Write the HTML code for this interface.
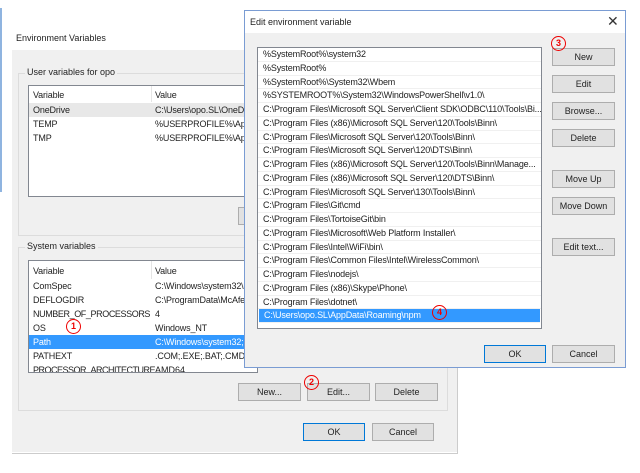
<!DOCTYPE html>
<html><head><style>
body{margin:0;width:640px;height:473px;background:#fff;position:relative;overflow:hidden;font-family:"Liberation Sans",sans-serif;font-size:9px;color:#222}
.a{position:absolute}
.btn{position:absolute;background:#e1e1e1;border:1px solid #adadad;box-sizing:border-box;text-align:center;line-height:16px;font-size:9px}
.btn.d{border:1px solid #0078d7}
.gb{position:absolute;border:1px solid #dcdcdc;box-sizing:border-box}
.gl{position:absolute;background:#f0f0f0;padding:0 2px;top:-7px;left:6px}
.lv{position:absolute;background:#fff;border:1px solid #828790;box-sizing:border-box;overflow:hidden;letter-spacing:-0.15px}
.r{position:absolute;left:0;right:0;height:14px;line-height:14px;white-space:nowrap}
.c{position:absolute;border:1.5px solid #e00;border-radius:50%;width:15px;height:15px;color:#e00;font-size:9px;font-weight:bold;text-align:center;line-height:13px;box-sizing:border-box}
.er{position:absolute;left:0;right:0;height:13.75px;line-height:13.75px;border-bottom:1px solid #f0f0f0;padding-left:5px;white-space:nowrap;box-sizing:border-box;overflow:hidden}
</style></head><body>
<div class="a" style="left:0;top:8px;width:2px;height:184px;background:#8fb4e0"></div>
<div class="a" style="left:12px;top:30px;width:445px;height:423px;background:#fff;border-right:1px solid #ccc;border-bottom:1px solid #ccc"></div>
<div class="a" style="left:16px;top:33px">Environment Variables</div>
<div class="a" style="left:12px;top:50px;width:445px;height:402px;background:#f0f0f0"></div>
<div class="gb" style="left:18px;top:73px;width:240px;height:163px"><span class="gl">User variables for opo</span></div>
<div class="lv" style="left:28px;top:85px;width:230px;height:112px">
<div class="r" style="top:2px;left:4px">Variable</div><div class="a" style="left:122px;top:0;width:1px;height:16px;background:#e5e5e5"></div><div class="r" style="top:2px;left:126px">Value</div>
<div class="r" style="top:17px;background:#e8e8e8;padding-left:4px">OneDrive<span class="a" style="left:126px">C:\Users\opo.SL\OneDrive</span></div>
<div class="r" style="top:31px;padding-left:4px">TEMP<span class="a" style="left:126px">%USERPROFILE%\AppData</span></div>
<div class="r" style="top:45px;padding-left:4px">TMP<span class="a" style="left:126px">%USERPROFILE%\AppData</span></div>
</div>
<div class="btn" style="left:238px;top:207px;width:62px;height:18px"></div>
<div class="gb" style="left:18px;top:247px;width:430px;height:164px"><span class="gl">System variables</span></div>
<div class="lv" style="left:28px;top:260px;width:230px;height:113px">
<div class="r" style="top:3px;left:4px">Variable</div><div class="a" style="left:122px;top:0;width:1px;height:18px;background:#e5e5e5"></div><div class="r" style="top:3px;left:126px">Value</div>
<div class="r" style="top:18px;padding-left:4px">ComSpec<span class="a" style="left:126px">C:\Windows\system32\cmd</span></div>
<div class="r" style="top:32px;padding-left:4px">DEFLOGDIR<span class="a" style="left:126px">C:\ProgramData\McAfee</span></div>
<div class="r" style="top:46px;padding-left:4px;letter-spacing:-0.4px">NUMBER_OF_PROCESSORS<span class="a" style="left:126px">4</span></div>
<div class="r" style="top:60px;padding-left:4px">OS<span class="a" style="left:126px">Windows_NT</span></div>
<div class="r" style="top:74px;padding-left:4px;background:#3399ff;color:#fff">Path<span class="a" style="left:126px">C:\Windows\system32;C:\</span></div>
<div class="r" style="top:88px;padding-left:4px">PATHEXT<span class="a" style="left:126px">.COM;.EXE;.BAT;.CMD;.VBS</span></div>
<div class="r" style="top:102px;padding-left:4px;letter-spacing:-0.5px">PROCESSOR_ARCHITECTURE<span class="a" style="left:126px;letter-spacing:0">AMD64</span></div>
</div>
<div class="btn" style="left:238px;top:383px;width:63px;height:18px">New...</div>
<div class="btn" style="left:307px;top:383px;width:63px;height:18px">Edit...</div>
<div class="btn" style="left:375px;top:383px;width:63px;height:18px">Delete</div>
<div class="btn d" style="left:303px;top:423px;width:62px;height:18px">OK</div>
<div class="btn" style="left:372px;top:423px;width:62px;height:18px">Cancel</div>

<div class="a" style="left:244px;top:10px;width:382px;height:358px;background:#f0f0f0;border:1px solid #7a9cd3;box-sizing:border-box"></div>
<div class="a" style="left:245px;top:11px;width:380px;height:22px;background:#fff"></div>
<div class="a" style="left:250px;top:17px">Edit environment variable</div>
<div class="a" style="left:607px;top:13px;font-size:14px;color:#333">✕</div>
<div class="lv" style="left:257px;top:47px;width:285px;height:282px">
<div style="position:absolute;left:0;right:0;top:0">
<div class="er" style="top:0">%SystemRoot%\system32</div>
<div class="er" style="top:13.75px">%SystemRoot%</div>
<div class="er" style="top:27.5px">%SystemRoot%\System32\Wbem</div>
<div class="er" style="top:41.25px">%SYSTEMROOT%\System32\WindowsPowerShell\v1.0\</div>
<div class="er" style="top:55px">C:\Program Files\Microsoft SQL Server\Client SDK\ODBC\110\Tools\Bi...</div>
<div class="er" style="top:68.75px">C:\Program Files (x86)\Microsoft SQL Server\120\Tools\Binn\</div>
<div class="er" style="top:82.5px">C:\Program Files\Microsoft SQL Server\120\Tools\Binn\</div>
<div class="er" style="top:96.25px">C:\Program Files\Microsoft SQL Server\120\DTS\Binn\</div>
<div class="er" style="top:110px">C:\Program Files (x86)\Microsoft SQL Server\120\Tools\Binn\Manage...</div>
<div class="er" style="top:123.75px">C:\Program Files (x86)\Microsoft SQL Server\120\DTS\Binn\</div>
<div class="er" style="top:137.5px">C:\Program Files\Microsoft SQL Server\130\Tools\Binn\</div>
<div class="er" style="top:151.25px">C:\Program Files\Git\cmd</div>
<div class="er" style="top:165px">C:\Program Files\TortoiseGit\bin</div>
<div class="er" style="top:178.75px">C:\Program Files\Microsoft\Web Platform Installer\</div>
<div class="er" style="top:192.5px">C:\Program Files\Intel\WiFi\bin\</div>
<div class="er" style="top:206.25px">C:\Program Files\Common Files\Intel\WirelessCommon\</div>
<div class="er" style="top:220px">C:\Program Files\nodejs\</div>
<div class="er" style="top:233.75px">C:\Program Files (x86)\Skype\Phone\</div>
<div class="er" style="top:247.5px">C:\Program Files\dotnet\</div>
<div class="er" style="top:261.25px;background:#3399ff;color:#fff;margin:0 1px">C:\Users\opo.SL\AppData\Roaming\npm</div>
</div></div>
<div class="btn" style="left:552px;top:48px;width:63px;height:18px">New</div>
<div class="btn" style="left:552px;top:75px;width:63px;height:18px">Edit</div>
<div class="btn" style="left:552px;top:102px;width:63px;height:18px">Browse...</div>
<div class="btn" style="left:552px;top:129px;width:63px;height:18px">Delete</div>
<div class="btn" style="left:552px;top:170px;width:63px;height:18px">Move Up</div>
<div class="btn" style="left:552px;top:197px;width:63px;height:18px">Move Down</div>
<div class="btn" style="left:552px;top:238px;width:63px;height:18px">Edit text...</div>
<div class="btn d" style="left:484px;top:345px;width:62px;height:18px">OK</div>
<div class="btn" style="left:552px;top:345px;width:63px;height:18px">Cancel</div>

<div class="c" style="left:66px;top:319px">1</div>
<div class="c" style="left:304px;top:375px">2</div>
<div class="c" style="left:551px;top:36px">3</div>
<div class="c" style="left:432px;top:305px">4</div>
</body></html>
